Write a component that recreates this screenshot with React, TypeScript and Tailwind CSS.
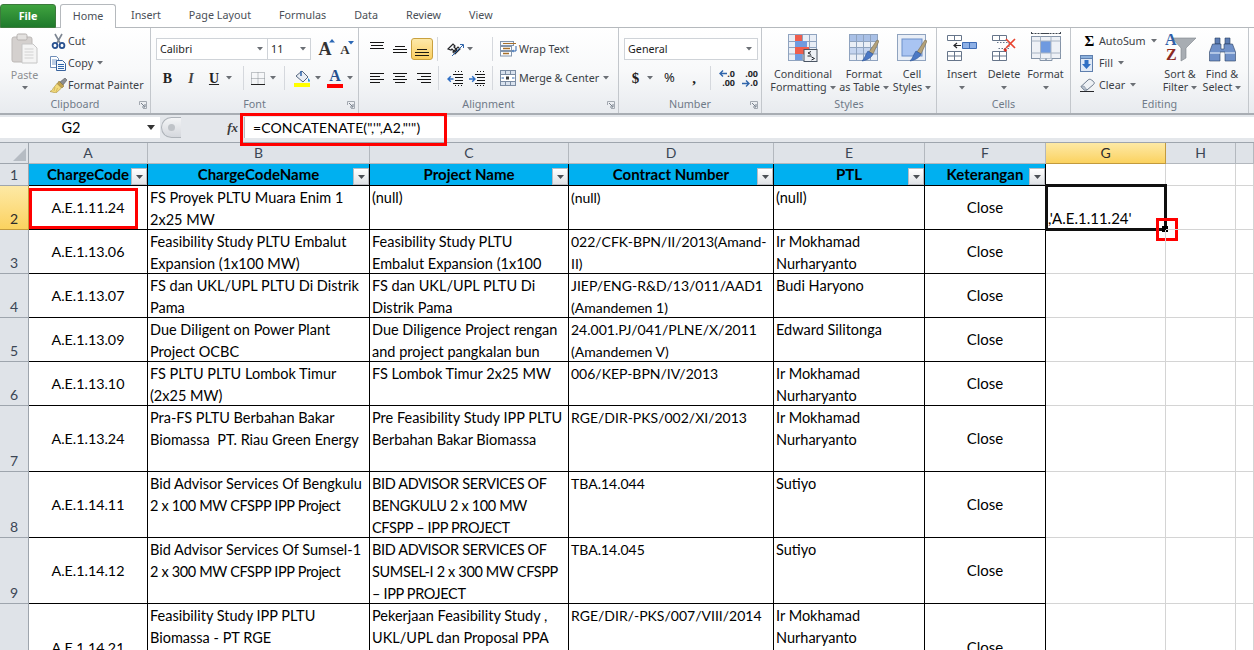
import type { ReactNode } from 'react';

const rows = [
  { n: '2', h: 'A.E.1.11.24', b: ['FS Proyek PLTU Muara Enim 1', '2x25 MW'], c: ['(null)'], d: ['(null)'], e: ['(null)'] },
  { n: '3', h: 'A.E.1.13.06', b: ['Feasibility Study PLTU Embalut', 'Expansion (1x100 MW)'], c: ['Feasibility Study PLTU', 'Embalut Expansion (1x100'], d: ['022/CFK-BPN/II/2013(Amand-', 'II)'], e: ['Ir Mokhamad', 'Nurharyanto'] },
  { n: '4', h: 'A.E.1.13.07', b: ['FS dan UKL/UPL PLTU Di Distrik', 'Pama'], c: ['FS dan UKL/UPL PLTU Di', 'Distrik Pama'], d: ['JIEP/ENG-R&D/13/011/AAD1', '(Amandemen 1)'], e: ['Budi Haryono'] },
  { n: '5', h: 'A.E.1.13.09', b: ['Due Diligent on Power Plant', 'Project OCBC'], c: ['Due Diligence Project rengan', 'and project pangkalan bun'], d: ['24.001.PJ/041/PLNE/X/2011', '(Amandemen V)'], e: ['Edward Silitonga'] },
  { n: '6', h: 'A.E.1.13.10', b: ['FS PLTU PLTU Lombok Timur', '(2x25 MW)'], c: ['FS Lombok Timur 2x25 MW'], d: ['006/KEP-BPN/IV/2013'], e: ['Ir Mokhamad', 'Nurharyanto'] },
  { n: '7', h: 'A.E.1.13.24', b: ['Pra-FS PLTU Berbahan Bakar', 'Biomassa  PT. Riau Green Energy'], c: ['Pre Feasibility Study IPP PLTU', 'Berbahan Bakar Biomassa'], d: ['RGE/DIR-PKS/002/XI/2013'], e: ['Ir Mokhamad', 'Nurharyanto'] },
  { n: '8', h: 'A.E.1.14.11', b: ['Bid Advisor Services Of Bengkulu', '2 x 100 MW CFSPP IPP Project'], c: ['BID ADVISOR SERVICES OF', 'BENGKULU 2 x 100 MW', 'CFSPP – IPP PROJECT'], d: ['TBA.14.044'], e: ['Sutiyo'] },
  { n: '9', h: 'A.E.1.14.12', b: ['Bid Advisor Services Of Sumsel-1', '2 x 300 MW CFSPP IPP Project'], c: ['BID ADVISOR SERVICES OF', 'SUMSEL-I 2 x 300 MW CFSPP', '– IPP PROJECT'], d: ['TBA.14.045'], e: ['Sutiyo'] },
  { n: '10', h: 'A.E.1.14.21', b: ['Feasibility Study IPP PLTU', 'Biomassa - PT RGE'], c: ['Pekerjaan Feasibility Study ,', 'UKL/UPL dan Proposal PPA'], d: ['RGE/DIR/-PKS/007/VIII/2014'], e: ['Ir Mokhamad', 'Nurharyanto'] },
];

// Lato's capitals run wider than Calibri's, so the all-caps lines get pulled in
const capsLine = /CFSPP|ADVISOR|BENGKULU|PROJECT/;

const Caret = ({ className = '' }: { className?: string }) => (
  <svg width="6" height="4" viewBox="0 0 6 4" className={`shrink-0 ${className}`}>
    <path d="M0 0h6L3 3.5z" fill="#6b6f75" />
  </svg>
);

const Launcher = () => (
  <svg width="8" height="8" viewBox="0 0 8 8" className="absolute right-[3px] bottom-[4px]">
    <path d="M.5 4V.5H7.5V7.5H4" fill="none" stroke="#a3a9b1" />
    <path d="M2 2l3.5 3.5M6 3v3H3" fill="none" stroke="#77808c" />
  </svg>
);

const Sep = ({ className = '' }: { className?: string }) => <div className={`h-[24px] w-px shrink-0 bg-[#d5d8dd] ${className}`} />;

function Group({ label, width, launcher, children }: { label: string; width: string; launcher?: boolean; children: ReactNode }) {
  return (
    <div className={`relative flex shrink-0 flex-col border-r border-[#c3c7cc] ${width}`}>
      <div className="h-[68px] shrink-0">{children}</div>
      <div className="flex h-[17px] shrink-0 items-center justify-center text-[#6f7a88]">{label}</div>
      {launcher && <Launcher />}
    </div>
  );
}

function BigButton({ icon, lines, width, caretOwnLine }: { icon: ReactNode; lines: string[]; width: string; caretOwnLine?: boolean }) {
  return (
    <div className={`flex shrink-0 flex-col items-center ${width}`}>
      <div className="flex h-[34px] items-end justify-center">{icon}</div>
      <div className="mt-[6px] leading-[13px] whitespace-nowrap">{lines[0]}</div>
      {caretOwnLine ? (
        <Caret className="mt-[5px]" />
      ) : (
        <div className="flex items-center gap-[3px] leading-[13px] whitespace-nowrap">
          {lines[1]}
          <Caret />
        </div>
      )}
    </div>
  );
}

function PasteIcon() {
  return (
    <svg width="27" height="31" viewBox="0 0 27 31">
      <rect x="1" y="4" width="20" height="25" rx="2" fill="#d4d0ce" stroke="#bdb9b7" />
      <rect x="6" y="1" width="10" height="6" rx="1.5" fill="#e3e1df" stroke="#b5b1af" />
      <path d="M11 11h11l4 4v15H11z" fill="#f4f4f4" stroke="#c6c6c6" />
      <path d="M13.5 16h9M13.5 19h9M13.5 22h9M13.5 25h9" stroke="#d2d2d2" />
    </svg>
  );
}

function CutIcon() {
  return (
    <svg width="15" height="16" viewBox="0 0 15 16">
      <path d="M4 1l5 9M11 1L6 10" stroke="#7d8692" strokeWidth="1.6" />
      <ellipse cx="4" cy="12.5" rx="2.4" ry="2.6" fill="none" stroke="#27508f" strokeWidth="1.8" />
      <ellipse cx="11" cy="12.5" rx="2.4" ry="2.6" fill="none" stroke="#27508f" strokeWidth="1.8" />
    </svg>
  );
}

function CopyIcon() {
  return (
    <svg width="16" height="15" viewBox="0 0 16 15">
      <path d="M.5.5h6l2 2v9h-8z" fill="#fff" stroke="#6f8db8" />
      <path d="M2 4h5M2 6h5M2 8h5" stroke="#7a9cc9" />
      <path d="M6.5 4.5h6l3 3v7h-9z" fill="#f7fafd" stroke="#39639d" />
      <path d="M8 8.5h6M8 10.5h6M8 12.5h6" stroke="#2f65ab" />
    </svg>
  );
}

function BrushIcon() {
  return (
    <svg width="17" height="15" viewBox="0 0 17 15">
      <path d="M10 4l5-4 2 2-4 5z" fill="#8b8d91" stroke="#55585c" strokeWidth=".6" />
      <path d="M9 3l5 5-2 2-5-4z" fill="#c3a24e" stroke="#7b6a35" strokeWidth=".5" />
      <path d="M7 5.5l4.500 4.500L6 15 0 13.500c2.500-1 3-3 3-3z" fill="#f2da7c" stroke="#a68d3d" strokeWidth=".6" />
      <path d="M5 9l-1 4M7.500 10L6 14" stroke="#bfa24a" strokeWidth=".6" />
    </svg>
  );
}

function GrowFont({ shrink }: { shrink?: boolean }) {
  return (
    <div className={`relative flex items-end justify-center font-['Liberation_Serif',serif] font-bold text-[#333] ${shrink ? 'w-[16px] text-[13px] leading-[15px]' : 'w-[18px] text-[18px] leading-[18px]'}`}>
      A
      <svg width="6" height="4" viewBox="0 0 6 4" className="absolute -top-[1px] -right-[1px]">
        <path d={shrink ? 'M0 0h6L3 3.500z' : 'M0 3.500h6L3 0z'} fill="#2c68b5" />
      </svg>
    </div>
  );
}

function Lines({ widths, x = 'center', active }: { widths: number[]; x?: 'left' | 'center' | 'right'; active?: boolean }) {
  const pos = x === 'left' ? 'items-start' : x === 'right' ? 'items-end' : 'items-center';
  return (
    <div className={`flex flex-col gap-[2px] ${pos}`}>
      {widths.map((w, i) => (
        <div key={i} className={`h-px ${active ? 'bg-[#1e1b10]' : 'bg-[#151515]'}`} style={{ width: w }} />
      ))}
    </div>
  );
}

function OrientationIcon() {
  return (
    <svg width="18" height="17" viewBox="0 0 18 17">
      <path d="M1 8l5-5 2 2-1 1 3 3-2 2-3-3-1 1zM6 11l5-5 2 2-5 5z" fill="none" stroke="#26272b" strokeWidth="1.2" />
      <path d="M5 15L16 4" stroke="#2f65ab" strokeWidth="1" />
      <path d="M13 3.500h3.500V7" fill="none" stroke="#2f65ab" />
    </svg>
  );
}

function WrapIcon() {
  return (
    <svg width="17" height="16" viewBox="0 0 17 16">
      <rect x=".5" y=".5" width="13" height="4" fill="#f3f5f8" stroke="#8295ad" />
      <rect x=".5" y="5.500" width="11" height="4" fill="#fff" stroke="#8295ad" />
      <rect x=".5" y="10.500" width="11" height="4.500" fill="#fff" stroke="#8295ad" />
      <path d="M3 7.500h7M3 12.500h6" stroke="#a8702a" strokeWidth="1.300" />
      <path d="M3 2.500h13" stroke="#a8702a" />
      <path d="M16 5v5h-3" fill="none" stroke="#2f65ab" />
      <path d="M13.500 8.500v3l-2-1.500z" fill="#2f65ab" />
    </svg>
  );
}

function MergeIcon() {
  return (
    <svg width="16" height="16" viewBox="0 0 16 16">
      <rect x=".5" y=".5" width="15" height="15" fill="#d9e2ee" stroke="#7b8ca3" />
      <path d="M.5 4.500h15M.5 11.500h15M5.500 .5v4M10.500 .5v4M5.500 11.500v4M10.500 11.500v4" stroke="#7b8ca3" />
      <rect x="1" y="5" width="14" height="6" fill="#fff" />
      <path d="M1.500 8h2.500M14.500 8H12" stroke="#2f65ab" />
      <path d="M6 6.500h3v3H6z" fill="#3b3b3b" />
    </svg>
  );
}

function Indent({ right }: { right?: boolean }) {
  return (
    <svg width="16" height="16" viewBox="0 0 16 16">
      <path d="M6 4.500h10M8 7.500h8M8 10.500h8M6 13.500h10M8 1.500h1M11 1.500h1M14 1.500h1" stroke="#151515" />
      <path d="M8 15.500h1M11 15.500h1M14 15.500h1" stroke="#151515" />
      <path d={right ? 'M0 9h5.500M3.200 6.300L6 9l-2.800 2.700' : 'M6.500 9H1M3.800 6.300L1 9l2.800 2.700'} fill="none" stroke="#2f6fc4" strokeWidth="1.400" />
    </svg>
  );
}

function DecimalIcon({ dec }: { dec?: boolean }) {
  return (
    <div className="relative h-[17px] w-[16px] font-['Noto_Sans',sans-serif] text-[9px] leading-[8px] font-bold text-[#26272b]">
      <div className="absolute top-0 right-0">{dec ? '.00' : '.0'}</div>
      <div className="absolute right-0 bottom-0">{dec ? '.0' : '.00'}</div>
      <svg width="8" height="7" viewBox="0 0 8 7" className={dec ? 'absolute bottom-0 left-0' : 'absolute top-0 left-0'}>
        <path d={dec ? 'M0 3.500h7M4 .5l3 3-3 3' : 'M8 3.500H1M4 .5l-3 3 3 3'} fill="none" stroke="#2f65ab" strokeWidth="1.400" />
      </svg>
    </div>
  );
}

function TableGrid({ children }: { children?: ReactNode }) {
  return (
    <svg width="30" height="28" viewBox="0 0 30 28">
      <rect x=".5" y=".5" width="28" height="26" fill="#e9eef6" stroke="#8fa3bf" />
      {children}
    </svg>
  );
}

function ConditionalIcon() {
  return (
    <TableGrid>
      <path d="M7.500 .5v26M14.500 .5v26M21.500 .5v26M.5 7.500h28M.5 13.500h28M.5 20h28" stroke="#8fa3bf" />
      <rect x="7" y="1" width="7" height="6" fill="#ee5d4d" />
      <rect x="7" y="7" width="12" height="6" fill="#6f9ae0" />
      <rect x="7" y="13" width="14" height="7" fill="#ee5d4d" />
      <rect x="7" y="20" width="7" height="6" fill="#6f9ae0" />
      <rect x="16" y="15.500" width="13" height="12" fill="#eef1f5" stroke="#4b5563" />
      <path d="M23 17.500l-3 1.500 3 1.500M19.500 22h4M23.500 23l3 1.500-3 1.500" fill="none" stroke="#20242a" />
    </TableGrid>
  );
}

function BrushOverlay() {
  return (
    <>
      <path d="M20 18L28 6l2 1-6 13z" fill="#b4a27a" stroke="#756a4f" strokeWidth=".6" />
      <path d="M19 17l5 3c-1 3-5 6-11 7 3-3 3-6 6-10z" fill="#4c78c4" stroke="#2e5597" strokeWidth=".6" />
    </>
  );
}

function FormatTableIcon() {
  return (
    <TableGrid>
      <rect x="1" y="1" width="27" height="6" fill="#a9c0e6" />
      <rect x="1" y="13" width="27" height="7" fill="#c4d4ef" />
      <path d="M7.500 .5v26M14.500 .5v26M21.500 .5v26M.5 7.500h28M.5 13.500h28M.5 20h28" stroke="#8fa3bf" />
      <BrushOverlay />
    </TableGrid>
  );
}

function CellStylesIcon() {
  return (
    <TableGrid>
      <rect x="5" y="5" width="20" height="17" fill="#a9c4f2" stroke="#6d8fc9" />
      <BrushOverlay />
    </TableGrid>
  );
}

function InsertIcon() {
  return (
    <svg width="30" height="27" viewBox="0 0 30 27">
      <g fill="#fff" stroke="#66758a">
        <path d="M.5.5h14v5h-14zM7.500 .5v5M.5 16.500h14v9h-14zM7.500 16.500v9M.5 21h14" />
      </g>
      <path d="M15.500 7.500h14v6h-14zM22.500 7.500v6" fill="#8db0e6" stroke="#3f6cb5" />
      <path d="M14 10.500H7M10 8l-3 2.500 3 2.500" fill="none" stroke="#26272b" strokeWidth="1.200" />
    </svg>
  );
}

function DeleteIcon() {
  return (
    <svg width="25" height="27" viewBox="0 0 25 27">
      <g fill="#fff" stroke="#66758a">
        <path d="M.5.5h14v5h-14zM7.500 .5v5M.5 16.500h14v9h-14zM7.500 16.500v9M.5 21h14" />
      </g>
      <path d="M5 7.500h12v6H5" fill="none" stroke="#66758a" strokeDasharray="1.500 1.500" />
      <path d="M14 4l9 9M23 4l-9 9" stroke="#e8432f" strokeWidth="1.700" />
      <path d="M14 14l-1.500 2" stroke="#d92c1d" strokeWidth="3" />
    </svg>
  );
}

function FormatCellIcon() {
  return (
    <svg width="30" height="30" viewBox="0 0 30 30">
      <path d="M.5 1.500h29M.5 0v3M29.500 0v3M11 1.500h7" stroke="#3f4650" strokeDasharray="2 1" />
      <rect x=".5" y="4.500" width="29" height="22" fill="#eef1f6" stroke="#8594a8" />
      <rect x="9" y="9" width="11" height="12" fill="#6f9ae0" />
      <path d="M9.500 4.500v22M20 4.500v22M.5 9h29M.5 21h29" stroke="#a8b4c4" />
      <path d="M9 26.500v2h6v-2M15 26.500v2h6v-2" fill="#eef1f6" stroke="#8594a8" />
    </svg>
  );
}

function FillIcon() {
  return (
    <svg width="13" height="17" viewBox="0 0 13 17">
      <rect x=".5" y=".5" width="12" height="16" fill="#dfe9f6" stroke="#5f7fae" />
      <rect x=".5" y=".5" width="12" height="3" fill="#8bb0dc" stroke="#5f7fae" />
      <path d="M4.500 5h4v4h2.500l-4.500 5L2 9h2.500z" fill="#2f6fc4" />
    </svg>
  );
}

function EraserIcon() {
  return (
    <svg width="15" height="14" viewBox="0 0 15 14">
      <path d="M1 8.500L8 2c1-1 2.500-1 3.500 0l2 1.500c1 1 1 2 0 3L7 12H4z" fill="#eef1f5" stroke="#6c7a8c" />
      <path d="M1 8.500L4 12h3L4 8z" fill="#b9c3d0" stroke="#6c7a8c" strokeWidth=".5" />
      <path d="M0 13.500h14" stroke="#26272b" />
    </svg>
  );
}

function SortIcon() {
  return (
    <svg width="32" height="30" viewBox="0 0 32 30">
      <path d="M8 6h24L22 16v10l-5 3V16z" fill="#a8adb3" stroke="#7e848c" strokeWidth=".6" />
      <text x="1" y="13" fontFamily="Liberation Serif, serif" fontWeight="700" fontSize="16" fill="#2f5fa8">A</text>
      <text x="2" y="28" fontFamily="Liberation Serif, serif" fontWeight="700" fontSize="16" fill="#8b2a22">Z</text>
    </svg>
  );
}

function BinocularsIcon() {
  return (
    <svg width="27" height="26" viewBox="0 0 27 26">
      <path d="M6 2h5v6H6zM16 2h5v6h-5z" fill="#5d7db3" stroke="#2a3f63" strokeWidth=".6" />
      <path d="M3.500 8h8.500v5h3V8h8.500l3 8v9H16V16h-5v9H.5v-9z" fill="#6f90c8" stroke="#2a3f63" strokeWidth=".6" />
      <path d="M1 17h10M16 17h10" stroke="#c9d7ee" strokeWidth="1.500" />
    </svg>
  );
}

const ribbonFont = "font-['Noto_Sans',sans-serif] text-[10.75px]";

function Ribbon() {
  return (
    <div className={`flex h-[87px] border-b-[2px] border-[#a8adb3] bg-gradient-to-b from-white via-[#f8f9fa] to-[#e8ebef] text-[#3b3f46] ${ribbonFont}`}>
      <Group label="Clipboard" width="w-[151px]" launcher>
        <div className="flex h-full">
          <div className="flex w-[49px] shrink-0 flex-col items-center pt-[5px] text-[#8d8f92]">
            <PasteIcon />
            <div className="mt-[4px] leading-[14px]">Paste</div>
            <Caret className="mt-[4px]" />
          </div>
          <div className="flex flex-col pt-[2px]">
            <div className="flex h-[22px] items-center"><span className="flex w-[19px] justify-center pr-[1px]"><CutIcon /></span>Cut</div>
            <div className="flex h-[22px] items-center"><span className="flex w-[19px] justify-center pr-[1px]"><CopyIcon /></span>Copy<Caret className="ml-[4px]" /></div>
            <div className="flex h-[22px] items-center whitespace-nowrap"><span className="flex w-[19px] justify-center pr-[1px]"><BrushIcon /></span>Format Painter</div>
          </div>
        </div>
      </Group>

      <Group label="Font" width="w-[208px]" launcher>
        <div className="flex flex-col pt-[10px] pl-[5px]">
          <div className="flex h-[22px] items-center">
            <div className="flex h-full w-[112px] items-center justify-between border border-[#cfd3d8] bg-white pr-[4px] pl-[3px] text-[#1e1e1e]">Calibri<Caret /></div>
            <div className="flex h-full w-[43px] items-center justify-between border border-l-0 border-[#cfd3d8] bg-white pr-[4px] pl-[3px] text-[#1e1e1e]">11<Caret /></div>
            <div className="ml-[5px]"><GrowFont /></div>
            <div className="ml-[3px]"><GrowFont shrink /></div>
          </div>
          <div className="mt-[7px] flex h-[22px] items-center font-['Liberation_Serif',serif] text-[14px] text-[#222]">
            <span className="ml-[6px] w-[11px] text-center font-bold">B</span>
            <span className="ml-[13px] w-[10px] text-center font-bold text-[#444] italic">I</span>
            <span className="ml-[12px] w-[12px] text-center font-bold underline">U</span>
            <Caret className="ml-[6px]" />
            <Sep className="ml-[11px]" />
            <svg width="14" height="13" viewBox="0 0 14 13" className="ml-[7px]">
              <path d="M.5.5h13v12h-13zM7 .5v12M.5 6.500h13" fill="none" stroke="#8b9097" strokeDasharray="1 1" />
              <path d="M0 12.500h14" stroke="#222" />
            </svg>
            <Caret className="ml-[5px]" />
            <Sep className="ml-[8px]" />
            <svg width="17" height="18" viewBox="0 0 17 18" className="ml-[9px]">
              <path d="M2 7l6-5 6 6-5 5z" fill="#e9eef5" stroke="#56677f" />
              <path d="M7 2v5" stroke="#2f65ab" strokeWidth="1.500" />
              <path d="M14 9c1 1 2 2 2 3s-2 1-2 0z" fill="#2f8fd3" />
              <rect x="0" y="14" width="16" height="4" fill="#ffff00" />
            </svg>
            <Caret className="ml-[4px]" />
            <div className="ml-[6px] flex w-[16px] flex-col items-center">
              <span className="h-[14px] text-[16px] leading-[14px] font-bold text-[#26508f]">A</span>
              <span className="mt-[1px] h-[4px] w-[16px] bg-[#ff0000]" />
            </div>
            <Caret className="ml-[4px]" />
          </div>
        </div>
      </Group>

      <Group label="Alignment" width="w-[260px]" launcher>
        <div className="flex flex-col pt-[10px] pl-[11px]">
          <div className="flex h-[22px] items-center">
            <div className="flex h-full w-[17px] items-start pt-[4px]"><Lines widths={[14, 12, 14]} /></div>
            <div className="ml-[6px] flex h-full w-[15px] items-center"><Lines widths={[10, 14, 14]} /></div>
            <div className="ml-[3px] flex h-full w-[22px] items-end justify-center rounded-[3px] border border-[#c9a13f] bg-gradient-to-b from-[#fde9a8] to-[#fbcf5f] pb-[3px]"><Lines widths={[10, 14, 14]} active /></div>
            <Sep className="ml-[4px]" />
            <div className="ml-[9px]"><OrientationIcon /></div>
            <Caret className="ml-[2px]" />
            <Sep className="ml-[19px]" />
            <div className="ml-[7px]"><WrapIcon /></div>
            <span className="ml-[2px] whitespace-nowrap">Wrap Text</span>
          </div>
          <div className="mt-[7px] flex h-[22px] items-center">
            <div className="flex w-[17px]"><Lines widths={[14, 10, 14, 10]} x="left" /></div>
            <div className="ml-[6px] flex w-[15px]"><Lines widths={[14, 10, 14, 10]} /></div>
            <div className="ml-[7px] flex w-[16px] justify-end"><Lines widths={[14, 10, 14, 10]} x="right" /></div>
            <Sep className="ml-[7px]" />
            <div className="ml-[8px]"><Indent /></div>
            <div className="ml-[6px]"><Indent right /></div>
            <Sep className="ml-[7px]" />
            <div className="ml-[7px]"><MergeIcon /></div>
            <span className="ml-[3px] whitespace-nowrap">Merge &amp; Center</span>
            <Caret className="ml-[4px]" />
          </div>
        </div>
      </Group>

      <Group label="Number" width="w-[143px]" launcher>
        <div className="flex flex-col pt-[10px] pl-[5px]">
          <div className="flex h-[22px] w-[134px] items-center justify-between border border-[#cfd3d8] bg-white pr-[5px] pl-[3px] text-[#1e1e1e]">General<Caret /></div>
          <div className="mt-[7px] flex h-[22px] items-center text-[#222]">
            <span className="ml-[7px] w-[9px] text-center font-['Liberation_Serif',serif] text-[15px] font-bold">$</span>
            <Caret className="ml-[7px]" />
            <span className="ml-[10px] w-[13px] text-center text-[13px]">%</span>
            <span className="ml-[15px] w-[6px] text-center font-['Liberation_Serif',serif] text-[15px] font-bold">,</span>
            <Sep className="ml-[13px]" />
            <div className="ml-[8px]"><DecimalIcon /></div>
            <div className="ml-[7px]"><DecimalIcon dec /></div>
          </div>
        </div>
      </Group>

      <Group label="Styles" width="w-[175px]">
        <div className="flex h-full pl-[5px]">
          <BigButton icon={<ConditionalIcon />} lines={['Conditional', 'Formatting']} width="w-[72px]" />
          <BigButton icon={<FormatTableIcon />} lines={['Format', 'as Table']} width="w-[50px]" />
          <BigButton icon={<CellStylesIcon />} lines={['Cell', 'Styles']} width="w-[46px]" />
        </div>
      </Group>

      <Group label="Cells" width="w-[134px]">
        <div className="flex h-full pl-[4px]">
          <BigButton icon={<InsertIcon />} lines={['Insert']} width="w-[42px]" caretOwnLine />
          <BigButton icon={<DeleteIcon />} lines={['Delete']} width="w-[42px]" caretOwnLine />
          <BigButton icon={<FormatCellIcon />} lines={['Format']} width="w-[41px]" caretOwnLine />
        </div>
      </Group>

      <Group label="Editing" width="w-[178px]">
        <div className="flex h-full pl-[9px]">
          <div className="flex w-[78px] shrink-0 flex-col pt-[2px]">
            <div className="flex h-[22px] items-center whitespace-nowrap"><span className="flex w-[19px] justify-center font-['Liberation_Serif',serif] text-[15px] font-bold text-black">Σ</span>AutoSum<Caret className="ml-[5px]" /></div>
            <div className="flex h-[22px] items-center"><span className="flex w-[19px] justify-start"><FillIcon /></span>Fill<Caret className="ml-[5px]" /></div>
            <div className="flex h-[22px] items-center"><span className="flex w-[19px] justify-start"><EraserIcon /></span>Clear<Caret className="ml-[5px]" /></div>
          </div>
          <BigButton icon={<SortIcon />} lines={['Sort &', 'Filter']} width="w-[44px]" />
          <BigButton icon={<BinocularsIcon />} lines={['Find &', 'Select']} width="w-[40px]" />
        </div>
      </Group>
    </div>
  );
}

function FilterButton() {
  return (
    <div className="absolute right-0 bottom-0 flex h-[17px] w-[16px] items-center justify-center border border-[#b8bcc2] bg-gradient-to-b from-white to-[#dfe2e6]">
      <svg width="7" height="4" viewBox="0 0 7 4"><path d="M0 0h7L3.500 4z" fill="#4b4f55" /></svg>
    </div>
  );
}

const headCell = 'relative flex items-center justify-center whitespace-nowrap border-r border-b border-black bg-[#00b0f0] text-[15px] font-bold text-black';
const bodyCell = 'overflow-hidden border-r border-b border-black px-[2px] pt-px leading-[22px] whitespace-pre text-black';
const gridCell = 'relative border-r border-b border-[#d4d4d4]';

function ColHead({ label, active }: { label: string; active?: boolean }) {
  return (
    <div className={`flex items-center justify-center border-r border-b pb-[1px] text-[14px] ${active ? 'border-[#c29a3d] bg-gradient-to-b from-[#fde9a4] to-[#fbd25e] text-[#2b2b2b]' : 'border-[#b3b8be] bg-[#dfe3e8] text-[#3b4654]'}`}>
      {label}
    </div>
  );
}

function RowHead({ label, active }: { label: string; active?: boolean }) {
  return (
    <div className={`flex items-end justify-center overflow-hidden border-r border-b text-[14px] leading-[20px] ${active ? 'border-[#c29a3d] bg-gradient-to-b from-[#fde9a4] to-[#fbd25e] text-[#2b2b2b]' : 'border-[#9ea5ad] bg-[#dfe3e8] text-[#3b4654]'}`}>
      {label}
    </div>
  );
}

function TextCell({ lines, size }: { lines: string[]; size: string }) {
  return (
    <div className={`${bodyCell} ${size}`}>
      {lines.map((line) => <div key={line} className={capsLine.test(line) ? 'tracking-[-0.35px]' : ''}>{line}</div>)}
    </div>
  );
}

function Sheet() {
  return (
    <div className="grid grid-cols-[29px_119px_222px_199px_205px_151px_121px_120px_70px_18px] grid-rows-[21px_22px_44px_44px_44px_44px_44px_66px_66px_66px_88px] font-['Lato',sans-serif]">
      <div className="relative border-r border-b border-[#9ea5ad] bg-[#dfe3e8]">
        <svg width="13" height="13" viewBox="0 0 13 13" className="absolute right-[2px] bottom-[2px]"><path d="M13 0v13H0z" fill="#b6bcc3" /></svg>
      </div>
      {['A', 'B', 'C', 'D', 'E', 'F', 'G', 'H', ''].map((c) => <ColHead key={c} label={c} active={c === 'G'} />)}

      <RowHead label="1" />
      {['ChargeCode', 'ChargeCodeName', 'Project Name', 'Contract Number', 'PTL', 'Keterangan'].map((h) => (
        <div key={h} className={headCell}>{h}<FilterButton /></div>
      ))}
      <div className={gridCell} /><div className={gridCell} /><div className={gridCell} />

      {rows.map((r) => (
        <div key={r.n} className="contents">
          <RowHead label={r.n} active={r.n === '2'} />
          <div className="relative flex items-center justify-center overflow-visible border-r border-b border-black text-[14.3px] text-black">
            {r.h}
            {r.n === '2' && <div className="absolute top-[2px] left-0 h-[41px] w-[109px] border-[3px] border-[#ff0000]" />}
          </div>
          <TextCell lines={r.b} size="text-[14.5px]" />
          <TextCell lines={r.c} size="text-[14.5px]" />
          <TextCell lines={r.d} size="text-[14px]" />
          <TextCell lines={r.e} size="text-[14.5px]" />
          <div className="flex items-center justify-center border-r border-b border-black text-[15px] text-black">Close</div>
          <div className={gridCell}>
            {r.n === '2' && (
              <>
                <div className="absolute bottom-0 left-[2px] text-[15px] leading-[22px] text-black">,'A.E.1.11.24'</div>
                <div className="absolute -top-[2px] -left-px h-[47px] w-[122px] border-[3px] border-[#101010]" />
                <div className="absolute -right-[3px] -bottom-[3px] h-[6px] w-[6px] bg-black" />
                <div className="absolute top-[32px] left-[110px] h-[23px] w-[22px] border-[3px] border-[#ff0000]" />
              </>
            )}
          </div>
          <div className={gridCell} />
          <div className={gridCell} />
        </div>
      ))}
    </div>
  );
}

export default function App() {
  return (
    <div className="relative h-[650px] w-[1254px] overflow-hidden bg-white">
      <div className={`flex h-[28px] items-end border-b border-[#b5b9bd] text-[#4a4f57] ${ribbonFont}`}>
        <div className="-mb-px flex h-[24px] w-[56px] items-center justify-center rounded-t-[3px] border border-[#3c7a3c] bg-gradient-to-b from-[#3fa33f] to-[#1f7a2c] font-bold text-white">File</div>
        <div className="-mb-px ml-[4px] flex h-[24px] w-[56px] items-center justify-center rounded-t-[3px] border border-b-0 border-[#b5b9bd] bg-white">Home</div>
        <div className="ml-[15px] flex h-[24px] items-center gap-[28px]">
          {['Insert', 'Page Layout', 'Formulas', 'Data', 'Review', 'View'].map((t) => <span key={t}>{t}</span>)}
        </div>
      </div>

      <Ribbon />

      <div className="flex h-[28px] items-stretch border-b border-[#9ea5ad] bg-[#e4e7eb] pt-[2px] pb-[4px]">
        <div className="flex w-[160px] items-center bg-white pr-[5px] font-['Lato',sans-serif] text-[14.5px] text-black">
          <span className="w-[142px] text-center">G2</span>
          <svg width="8" height="5" viewBox="0 0 8 5" className="ml-auto"><path d="M0 0h8L4 5z" fill="#333" /></svg>
        </div>
        <div className="flex w-[84px] items-center">
          <div className="ml-[1px] flex h-[21px] w-[20px] items-center justify-center rounded-l-full border border-r-0 border-[#aeb3b9] bg-gradient-to-b from-[#f3f4f6] to-[#d5d8dd]">
            <div className="h-[7px] w-[7px] rounded-full bg-[#bfc3c8]" />
          </div>
          <span className="mr-[6px] ml-auto font-['Liberation_Serif',serif] text-[13px] font-bold text-[#3a3a3a] italic">fx</span>
        </div>
        <div className="flex flex-1 items-center border-l border-[#b5b9bd] bg-white pl-[8px] font-['Lato',sans-serif] text-[14px] tracking-[0.12px] text-black">=CONCATENATE(",'",A2,"'")</div>
      </div>

      <Sheet />

      <div className="absolute top-[113px] left-[240px] h-[33px] w-[207px] border-[3px] border-[#ff0000]" />
    </div>
  );
}
